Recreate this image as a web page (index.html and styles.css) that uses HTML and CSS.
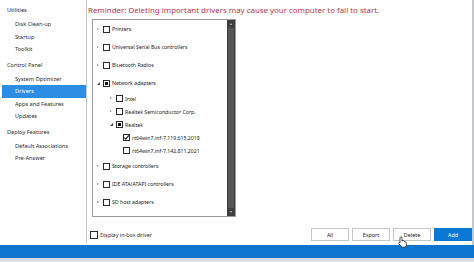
FILE: index.html
```html
<!DOCTYPE html>
<html lang="en">
<head>
    <meta charset="UTF-8">
    <title>Drivers</title>
    <link rel="stylesheet" href="styles.css">
</head>
<body>
    <div class="ventana">
        <div class="cuerpo">
            <!-- Menu lateral -->
            <nav class="menu">
                <div class="grupo">Utilities</div>
                <div class="opcion">Disk Clean-up</div>
                <div class="opcion">Startup</div>
                <div class="opcion">Toolkit</div>
                <div class="grupo">Control Panel</div>
                <div class="opcion">System Optimizer</div>
                <div class="opcion activa">Drivers</div>
                <div class="opcion">Apps and Features</div>
                <div class="opcion">Updates</div>
                <div class="grupo">Deploy Features</div>
                <div class="opcion">Default Associations</div>
                <div class="opcion">Pre-Answer</div>
            </nav>

            <!-- Contenido -->
            <main class="contenido">
                <p class="aviso">Reminder: Deleting important drivers may cause your computer to fail to start.</p>

                <div class="arbol">
                    <div class="lista">
                        <div class="fila n1"><span class="flecha"></span><span class="caja"></span>Printers</div>
                        <div class="fila n1"><span class="flecha"></span><span class="caja"></span>Universal Serial Bus controllers</div>
                        <div class="fila n1"><span class="flecha"></span><span class="caja"></span>Bluetooth Radios</div>
                        <div class="fila n1"><span class="flecha abierta"></span><span class="caja parcial"></span>Network adapters</div>
                        <div class="fila n2"><span class="flecha"></span><span class="caja"></span>Intel</div>
                        <div class="fila n2"><span class="flecha"></span><span class="caja"></span>Realtek Semiconductor Corp.</div>
                        <div class="fila n2"><span class="flecha abierta"></span><span class="caja parcial"></span>Realtek</div>
                        <div class="fila n3"><span class="caja marcada"><svg viewBox="0 0 7 7" width="7" height="7"><path d="M1.2 3.6 L2.8 5.2 L5.8 1.4" fill="none" stroke="#222" stroke-width="1.1"/></svg></span>rt64win7.inf-7.119.615.2018</div>
                        <div class="fila n3"><span class="caja"></span>rt64win7.inf-7.142.811.2021</div>
                        <div class="fila n1"><span class="flecha"></span><span class="caja"></span>Storage controllers</div>
                        <div class="fila n1"><span class="flecha"></span><span class="caja"></span>IDE ATA/ATAPI controllers</div>
                        <div class="fila n1"><span class="flecha"></span><span class="caja"></span>SD host adapters</div>
                        <div class="fila n1"><span class="flecha"></span><span class="caja"></span></div>
                    </div>
                    <div class="barra">
                        <span class="boton-barra">&#9650;</span>
                        <span class="pista"></span>
                        <span class="boton-barra">&#9660;</span>
                    </div>
                </div>

                <div class="pie">
                    <label class="opcion-caja"><span class="caja"></span>Display in-box driver</label>
                    <div class="botones">
                        <button>All</button>
                        <button>Export</button>
                        <button>Delete</button>
                        <button class="principal">Add</button>
                    </div>
                </div>

                <!-- Puntero del raton sobre Delete -->
                <svg class="puntero" viewBox="0 0 10 12" width="10" height="12">
                    <path d="M3 0.8 C3.6 0.8 4 1.2 4 1.8 V5 H4.6 V4.4 C5.3 4.2 5.8 4.6 5.8 5.2 C6.4 5 7 5.3 7 5.9 C7.6 5.8 8.3 6.1 8.3 6.8 V9 C8.3 10.3 7.5 11.2 6.2 11.2 H4.6 C3.7 11.2 3.2 10.8 2.7 10.1 L0.9 7.5 C0.6 7 0.9 6.4 1.5 6.5 L2 6.9 V1.8 C2 1.2 2.4 0.8 3 0.8 Z" fill="#fff" stroke="#111" stroke-width="0.7"/>
                </svg>
            </main>
            <div class="borde-derecho"></div>
        </div>
        <div class="barra-azul"></div>
        <div class="barra-gris"></div>
    </div>
</body>
</html>
```

FILE: styles.css
```css
/* Ventana de drivers */
body {
    margin: 0;
    padding: 0;
    font-family: "Noto Sans", "Open Sans", sans-serif;
    color: #2b2b2b;
    background: #fff;
}
.ventana {
    width: 474px;
    height: 262px;
    overflow: hidden;
    display: flex;
    flex-direction: column;
}
.cuerpo {
    height: 245px;
    display: flex;
}

/* Menu lateral */
.menu {
    width: 84px;
    padding: 4px 0 0 2px;
    border-right: 1px solid #c9c9c9;
    font-size: 5.6px;
    margin-bottom: 2px;
}
.grupo {
    height: 12px;
    line-height: 12px;
    padding-left: 5px;
    margin: 3px 0 2px;
}
.grupo:first-child {
    margin-top: 0;
}
.opcion {
    height: 12.5px;
    line-height: 12.5px;
    padding-left: 13px;
}
.opcion.activa {
    background: #2b8de3;
    color: #fff;
}

/* Contenido */
.contenido {
    flex: 1;
    position: relative;
    padding-left: 1px;
}
.aviso {
    margin: 4px 0 3px;
    height: 12px;
    line-height: 12px;
    font-size: 7.9px;
    color: #b4384c;
    white-space: nowrap;
}
.arbol {
    margin-left: 4px;
    width: 142px;
    height: 196px;
    border: 1px solid #9a9a9a;
    display: flex;
    font-size: 5.2px;
    color: #1a1a1a;
}
.lista {
    flex: 1;
    overflow: hidden;
}
.fila {
    display: flex;
    align-items: center;
    height: 18px;
    white-space: nowrap;
}
.fila.n1 { padding-left: 3px; }
.fila.n2 { padding-left: 16px; height: 13px; }
.fila.n3 { padding-left: 29px; height: 13px; }
.flecha {
    width: 6px;
    height: 7px;
    position: relative;
}
.flecha::after {
    content: "";
    position: absolute;
    left: 1px;
    top: 2px;
    border-left: 2px solid #8a8a8a;
    border-top: 1.5px solid transparent;
    border-bottom: 1.5px solid transparent;
}
.flecha.abierta::after {
    left: 1px;
    top: 2px;
    border: 0;
    width: 0;
    height: 0;
    border-right: 3px solid #444;
    border-top: 3px solid transparent;
}
.caja {
    width: 5px;
    height: 5px;
    border: 1px solid #2a2a2a;
    background: #fff;
    margin: 0 2px 0 1px;
    position: relative;
    flex-shrink: 0;
}
.caja.parcial::after {
    content: "";
    position: absolute;
    left: 1px;
    top: 1px;
    width: 3px;
    height: 3px;
    background: #111;
}
.caja svg {
    position: absolute;
    left: -1px;
    top: -1px;
}

/* Barra de desplazamiento */
.barra {
    width: 8px;
    background: #3f3f3f;
    display: flex;
    flex-direction: column;
    align-items: center;
}
.boton-barra {
    font-size: 3.5px;
    color: #bdbdbd;
    height: 8px;
    line-height: 8px;
}
.pista {
    flex: 1;
    width: 6px;
    background: #555;
}

/* Pie */
.pie {
    display: flex;
    align-items: center;
    justify-content: space-between;
    margin-top: 11px;
    padding-left: 2px;
}
.opcion-caja {
    display: flex;
    align-items: center;
    font-size: 5.4px;
}
.opcion-caja .caja {
    width: 6px;
    height: 6px;
    margin: 0 2px 0 0;
}
.botones {
    display: flex;
    gap: 3px;
    margin-right: 0;
}
.botones button {
    width: 38px;
    height: 13px;
    padding: 0;
    border: 1px solid #c6c6c6;
    background: #fff;
    font-family: inherit;
    font-size: 5.4px;
    color: #222;
}
.botones button.principal {
    background: #0b79d3;
    border-color: #0b79d3;
    color: #fff;
}
.puntero {
    position: absolute;
    left: 311px;
    top: 236px;
}
.borde-derecho {
    width: 2px;
    background: #c3c8cd;
}
.barra-azul {
    height: 13px;
    background: #0c75cf;
}
.barra-gris {
    flex: 1;
    background: linear-gradient(#cfd8e2, #dfe5ea);
}
```
